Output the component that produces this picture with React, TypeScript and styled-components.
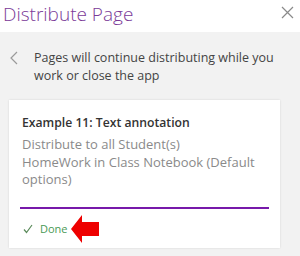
import React from 'react';
import styled, { createGlobalStyle } from 'styled-components';

const GlobalStyle = createGlobalStyle`
  html, body {
    margin: 0;
    padding: 0;
    background: #f2f2f2;
  }
  body {
    font-family: "Open Sans", "Noto Sans", sans-serif;
  }
`;

function App() {
  return (
    <>
      <GlobalStyle />
      <Panel>
        <Header>
          <Title>Distribute Page</Title>
          <CloseButton aria-label="Close">
            <svg width="13" height="13" viewBox="0 0 13 13">
              <path d="M1 1 L12 12 M12 1 L1 12" stroke="#8a8a8a" strokeWidth="1.2" fill="none" />
            </svg>
          </CloseButton>
        </Header>
        <Body>
          <InfoRow>
            <BackIcon width="8" height="14" viewBox="0 0 8 14">
              <path d="M7 1 L1 7 L7 13" stroke="#9a9a9a" strokeWidth="1.2" fill="none" />
            </BackIcon>
            <InfoText>Pages will continue distributing while you work or close the app</InfoText>
          </InfoRow>
          <Card>
            <CardTitle>Example 11: Text annotation</CardTitle>
            <CardText>
              <span>Distribute to all Student(s)</span>
              <span>HomeWork in Class Notebook (Default options)</span>
            </CardText>
            <Progress />
            <Status>
              <svg width="10" height="10" viewBox="0 0 10 10">
                <path d="M1 5.5 L3.5 8.5 L9 1" stroke="#5a8a5a" strokeWidth="1.2" fill="none" />
              </svg>
              <span className="label">Done</span>
              <Arrow width="28" height="30" viewBox="0 0 28 30">
                <path d="M0 15 L11 1 L11 8 L28 8 L28 22 L11 22 L11 29 Z" fill="#ee0000" />
              </Arrow>
            </Status>
          </Card>
        </Body>
      </Panel>
    </>
  );
}

export default App;

// Styles
const Panel = styled.div`
  width: 300px;
  height: 256px;
  display: flex;
  flex-direction: column;
  overflow: hidden;
`;

const Header = styled.div`
  height: 32px;
  flex: none;
  background: #ffffff;
  display: flex;
  align-items: center;
  justify-content: space-between;
  padding: 0 6px 0 3px;
  box-sizing: border-box;
`;

const Title = styled.h1`
  margin: 0;
  font-size: 19px;
  font-weight: 300;
  color: #7b3a98;
  line-height: 26px;
  margin-top: -4px;
`;

const CloseButton = styled.div`
  display: flex;
  align-items: center;
  margin-top: -8px;
`;

const Body = styled.div`
  flex: 1;
  background: #f2f2f2;
  padding: 17px 20px 0 9px;
`;

const InfoRow = styled.div`
  display: flex;
  align-items: flex-start;
`;

const BackIcon = styled.svg`
  flex: none;
  margin: 2px 16px 0 1px;
`;

const InfoText = styled.div`
  font-size: 12.5px;
  line-height: 18px;
  color: #444444;
`;

const Card = styled.div`
  margin-top: 15px;
  background: #ffffff;
  box-shadow: 0 0 2px rgba(0, 0, 0, 0.12);
  padding: 14px 11px 10px 11px;
  display: flex;
  flex-direction: column;
`;

const CardTitle = styled.div`
  padding-left: 2px;
  font-size: 12.2px;
  font-weight: 600;
  line-height: 18px;
  color: #333333;
`;

const CardText = styled.div`
  padding-left: 2px;
  padding-right: 14px;
  margin-top: 4px;
  font-size: 13px;
  line-height: 17.5px;
  color: #8a8a8a;
  span {
    display: block;
  }
`;

const Progress = styled.div`
  margin-top: 18px;
  height: 2px;
  background: #7719aa;
`;

const Status = styled.div`
  margin-top: 11px;
  display: flex;
  align-items: center;
  padding-left: 3px;
  height: 18px;
  .label {
    margin-left: 7px;
    font-size: 11px;
    color: #4a9a55;
  }
`;

const Arrow = styled.svg`
  margin-left: 3px;
  flex: none;
`;
